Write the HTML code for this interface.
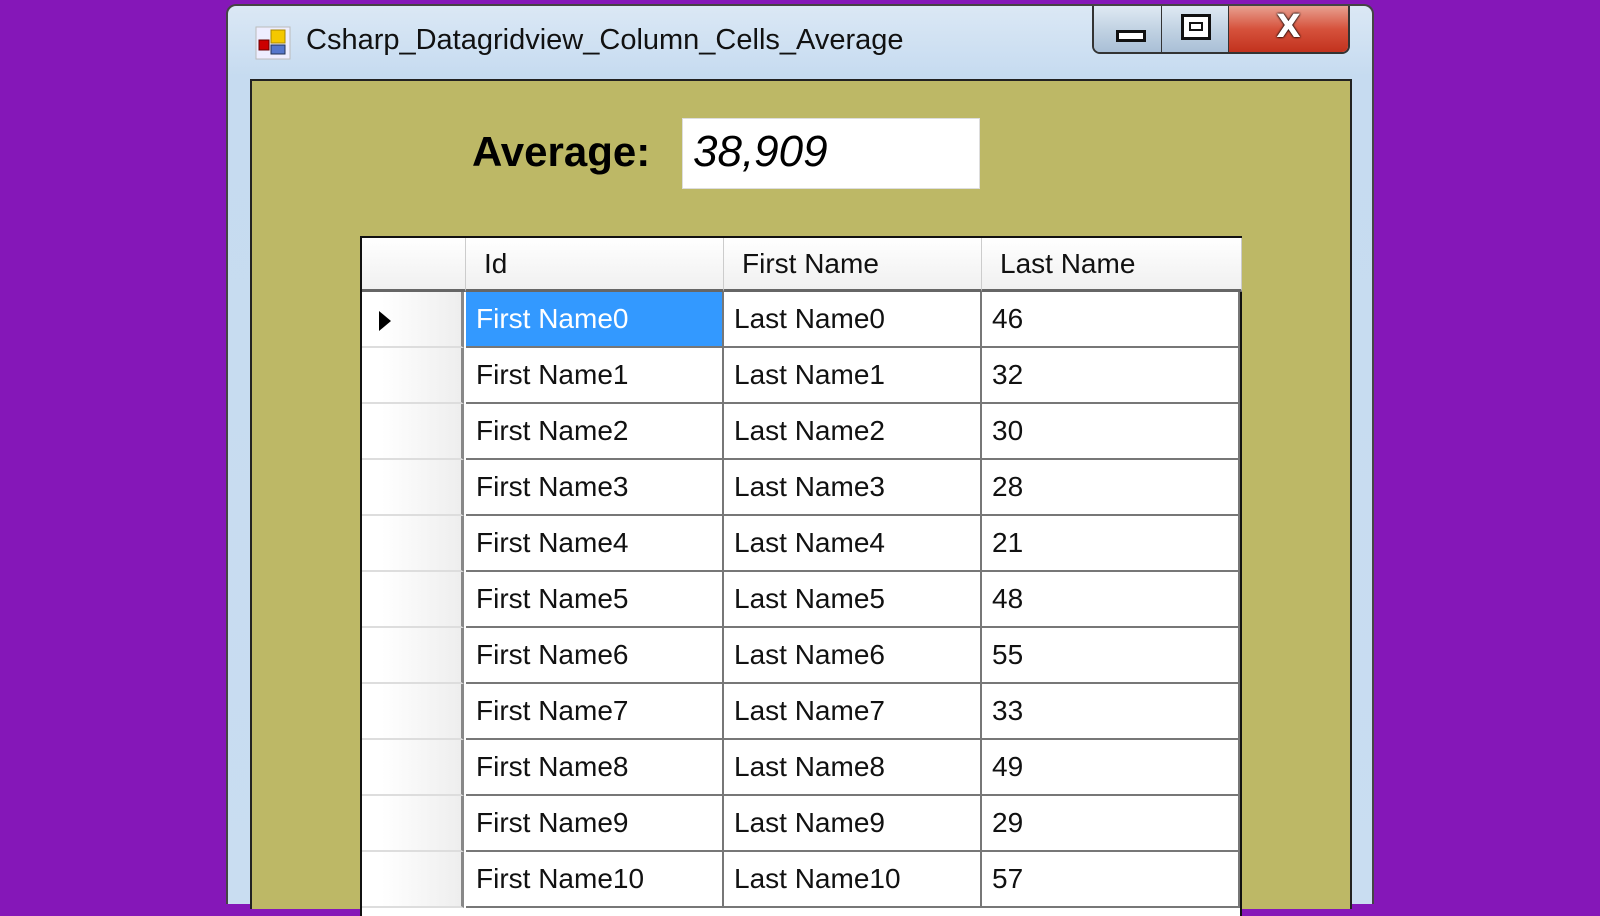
<!DOCTYPE html>
<html><head><meta charset="utf-8"><style>
*{margin:0;padding:0;box-sizing:border-box}
body{width:1600px;height:900px;overflow:hidden;background:#8517b8;position:relative;font-family:"Liberation Sans",sans-serif}
.win{position:absolute;left:226px;top:4px;width:1148px;height:900px;background:linear-gradient(#dbe8f5,#c6dbf0 70px,#c9ddf1);border:2px solid #444;border-bottom:none;border-radius:10px 10px 0 0}
.title{position:absolute;left:306px;top:24px;font-size:29px;color:#111;font-family:"Liberation Sans",sans-serif}
.client{position:absolute;left:250px;top:79px;width:1102px;height:830px;background:#bdb866;border:2px solid #222;border-bottom:none}
.btns{position:absolute;left:1092px;top:6px;height:48px;width:258px;border:2px solid #333;border-top:none;border-radius:0 0 8px 8px;overflow:hidden;display:flex}
.b{height:100%;background:linear-gradient(#dfe9f3,#c2d3e3 50%,#a9bfd6);border-right:1px solid #333}
.avg{position:absolute;left:472px;top:128px;font-size:42px;font-weight:bold;font-family:"Liberation Sans",sans-serif;color:#000}
.tb{position:absolute;left:682px;top:118px;width:298px;height:71px;background:#fff;border:1px solid #ddd;font-family:"Liberation Sans",sans-serif;font-style:italic;font-size:44px;padding:8px 10px;color:#000}
.grid{position:absolute;left:360px;top:236px;width:882px;height:680px;background:#fff;border:2px solid #111;border-bottom:none}
.cell{position:absolute;height:56px;border-bottom:2px solid #777;font-size:28px;line-height:54px;padding-left:10px;color:#111;white-space:nowrap}
.hdr{position:absolute;top:0;height:54px;background:linear-gradient(#fff,#f0f0f0);border-bottom:3px solid #666;border-right:1px solid #ccc;font-size:28px;line-height:52px;padding-left:18px;color:#111}
.rh{position:absolute;left:0;width:102px;height:56px;background:linear-gradient(90deg,#fff 20%,#eee);border-bottom:2px solid #ddd;border-right:3px solid #888}
</style></head><body>
<div class="win"></div>
<svg style="position:absolute;left:255px;top:26px" width="36" height="34"><rect x="1" y="1" width="34" height="32" fill="#eef" stroke="#bbb"/><rect x="4" y="14" width="10" height="10" fill="#c00" stroke="#600"/><rect x="16" y="4" width="14" height="13" fill="#f4c800" stroke="#a80"/><rect x="16" y="19" width="14" height="9" fill="#57c" stroke="#235"/></svg>
<div class="title">Csharp_Datagridview_Column_Cells_Average</div>
<div class="btns">
<div class="b" style="width:68px;position:relative"><div style="position:absolute;left:22px;top:24px;width:30px;height:12px;border:3px solid #111;background:#fff"></div></div>
<div class="b" style="width:67px;position:relative"><div style="position:absolute;left:19px;top:8px;width:30px;height:26px;border:3px solid #111;background:#fff"></div><div style="position:absolute;left:27px;top:16px;width:14px;height:9px;border:2px solid #111"></div></div>
<div style="flex:1;background:linear-gradient(#e8a090,#d6523c 50%,#c2321e);text-align:center;color:#fff;font:bold 32px 'DejaVu Sans',sans-serif;line-height:40px;text-shadow:0 0 2px #000,0 0 2px #000">X</div>
</div>
<div class="client"></div>
<div class="avg">Average:</div>
<div class="tb">38,909</div>
<div class="grid">
<div class="hdr" style="left:0;width:104px;padding:0"></div>
<div class="hdr" style="left:104px;width:258px">Id</div>
<div class="hdr" style="left:362px;width:258px">First Name</div>
<div class="hdr" style="left:620px;width:260px">Last Name</div>
<div id="rows"></div>
</div>
<script>
var ages=[46,32,30,28,21,48,55,33,49,29,57],h='';
for(var i=0;i<11;i++){var t=54+i*56;
h+='<div class="rh" style="top:'+t+'px">'+(i==0?'<svg style="position:absolute;left:16px;top:18px" width="14" height="22"><path d="M1 1L13 11L1 21Z" fill="#000"/></svg>':'')+'</div>';
h+='<div class="cell" style="top:'+t+'px;left:104px;width:258px;border-right:2px solid #777;'+(i==0?'background:#3399ff;color:#fff;':'')+'">First Name'+i+'</div>';
h+='<div class="cell" style="top:'+t+'px;left:362px;width:258px;border-right:2px solid #777">Last Name'+i+'</div>';
h+='<div class="cell" style="top:'+t+'px;left:620px;width:258px;border-right:2px solid #777">'+ages[i]+'</div>';}
document.getElementById('rows').innerHTML=h;
</script>
</body></html>
